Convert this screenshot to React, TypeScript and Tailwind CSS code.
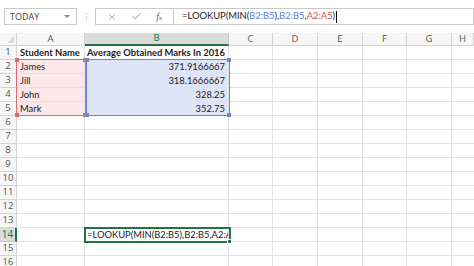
import { Check, X } from 'lucide-react';

const cols = ['A', 'B', 'C', 'D', 'E', 'F', 'G', 'H'];

const rows: { a?: string; b?: string; bold?: boolean }[] = [
  { a: 'Student Name', b: 'Average Obtained Marks In 2016', bold: true },
  { a: 'James', b: '371.9166667' },
  { a: 'Jill', b: '318.1666667' },
  { a: 'John', b: '328.25' },
  { a: 'Mark', b: '352.75' },
];

const Handle = ({ className, color }: { className: string; color: string }) => (
  <div className={`absolute w-[4px] h-[4px] ${color} ${className}`} />
);

const App = () => {
  const total = 16;
  return (
    <div className="w-[474px] h-[266px] overflow-hidden bg-white font-['Lato',sans-serif] text-[#222]">
      {/* Formula bar */}
      <div className="h-[33px] flex items-start pt-[8px]">
        <div className="ml-[4px] w-[73px] h-[17px] border border-[#c9c9c9] flex items-center justify-between pl-[5px] pr-[6px] font-['Open_Sans',sans-serif] text-[9px] text-[#444]">
          <span>TODAY</span>
          <span className="w-0 h-0 border-l-[3px] border-r-[3px] border-t-[3px] border-l-transparent border-r-transparent border-t-[#888]" />
        </div>
        <div className="w-[18px] h-[17px] flex flex-col items-center justify-center gap-[2px]">
          <span className="w-[1px] h-[1px] bg-[#aaa]" />
          <span className="w-[1px] h-[1px] bg-[#aaa]" />
          <span className="w-[1px] h-[1px] bg-[#aaa]" />
        </div>
        <div className="w-[78px] h-[17px] border border-[#c9c9c9] border-r-0 flex items-center justify-around px-[4px] text-[#666]">
          <X size={10} strokeWidth={1.3} />
          <Check size={11} strokeWidth={1.5} />
          <span className="font-['Liberation_Serif',serif] italic text-[10px] leading-none">
            f<span className="text-[6px] not-italic">x</span>
          </span>
        </div>
        <div className="flex-1 h-[17px] border border-[#c9c9c9] flex items-center pl-[8px] text-[9.4px] whitespace-nowrap">
          <span>=LOOKUP(MIN(</span>
          <span className="text-[#5d7fcf]">B2:B5</span>
          <span>),</span>
          <span className="text-[#5d7fcf]">B2:B5</span>
          <span>,</span>
          <span className="text-[#d9534f]">A2:A5</span>
          <span>)</span>
          <span className="w-[1px] h-[12px] bg-black ml-[1px]" />
        </div>
      </div>

      {/* Grid */}
      <div className="relative grid grid-cols-[17px_68px_144px_44px_45px_45px_44px_45px_1fr] grid-rows-[13px_repeat(16,14px)]">
        {/* header row */}
        <div className="bg-[#f6f6f6] border-r border-b border-[#d4d4d4] flex items-end justify-end pr-[2px] pb-[2px]">
          <svg width="7" height="7" viewBox="0 0 7 7">
            <path d="M7 0 L7 7 L0 7 Z" fill="#dadada" />
          </svg>
        </div>
        {cols.map((c) => (
          <div
            key={c}
            className={
              c === 'B'
                ? 'bg-[#dcdcdc] border-r border-[#c8c8c8] border-b-2 border-b-[#217346] flex items-center justify-center text-[9.5px] text-[#217346] font-["Open_Sans",sans-serif]'
                : 'bg-[#f6f6f6] border-r border-b border-[#d4d4d4] flex items-center justify-center text-[9.5px] text-[#555] font-["Open_Sans",sans-serif]'
            }
          >
            {c}
          </div>
        ))}

        {Array.from({ length: total }, (_, i) => {
          const r = i + 1;
          const d = rows[i];
          const sel = r === 14;
          const inRange = r >= 2 && r <= 5;
          return [
            <div
              key={`h${r}`}
              className={
                sel
                  ? 'bg-[#dcdcdc] border-r-2 border-r-[#217346] border-b border-[#c8c8c8] flex items-center justify-center text-[10px] text-[#217346] font-["Open_Sans",sans-serif]'
                  : 'bg-[#f6f6f6] border-r border-b border-[#d4d4d4] flex items-center justify-center text-[9.5px] text-[#555] font-["Open_Sans",sans-serif]'
              }
            >
              {r}
            </div>,
            <div
              key={`a${r}`}
              className={`border-r border-b border-[#e3e3e3] flex items-end pl-[3px] text-[9.4px] leading-[13px] whitespace-nowrap overflow-hidden ${
                inRange ? 'bg-[#fce8e8]' : ''
              } ${d?.bold ? 'font-bold' : ''}`}
            >
              {d?.a}
            </div>,
            <div
              key={`b${r}`}
              className={`border-r border-b border-[#e3e3e3] flex items-end text-[9.4px] leading-[13px] whitespace-nowrap overflow-hidden ${
                inRange ? 'bg-[#dfe5f8] justify-end pr-[3px]' : 'pl-[2px]'
              } ${d?.bold ? 'font-bold' : ''}`}
            >
              {sel ? '=LOOKUP(MIN(B2:B5),B2:B5,A2:A5)' : d?.b}
            </div>,
            ...['c', 'd', 'e', 'f', 'g', 'h'].map((k) => (
              <div key={`${k}${r}`} className={`border-b border-[#e3e3e3] ${k === 'h' ? '' : 'border-r'}`} />
            )),
          ];
        })}

        {/* range highlights */}
        <div className="absolute left-[16px] top-[26px] w-[70px] h-[57px] border border-[#de6b6b]">
          <Handle color="bg-[#de6b6b]" className="-left-[2px] -top-[2px]" />
          <Handle color="bg-[#de6b6b]" className="-right-[2px] -top-[2px]" />
          <Handle color="bg-[#de6b6b]" className="-left-[2px] -bottom-[2px]" />
          <Handle color="bg-[#de6b6b]" className="-right-[2px] -bottom-[2px]" />
        </div>
        <div className="absolute left-[86px] top-[26px] w-[144px] h-[57px] border border-[#6d86d4]">
          <Handle color="bg-[#6d86d4]" className="-left-[2px] -top-[2px]" />
          <Handle color="bg-[#6d86d4]" className="-right-[2px] -top-[2px]" />
          <Handle color="bg-[#6d86d4]" className="-left-[2px] -bottom-[2px]" />
          <Handle color="bg-[#6d86d4]" className="-right-[2px] -bottom-[2px]" />
        </div>

        {/* active cell B14 */}
        <div className="absolute left-[84px] top-[194px] w-[147px] h-[16px] border-2 border-[#217346]">
          <div className="absolute -right-[3px] -bottom-[3px] w-[5px] h-[5px] bg-[#217346] border border-white" />
        </div>
      </div>
    </div>
  );
};

export default App;
